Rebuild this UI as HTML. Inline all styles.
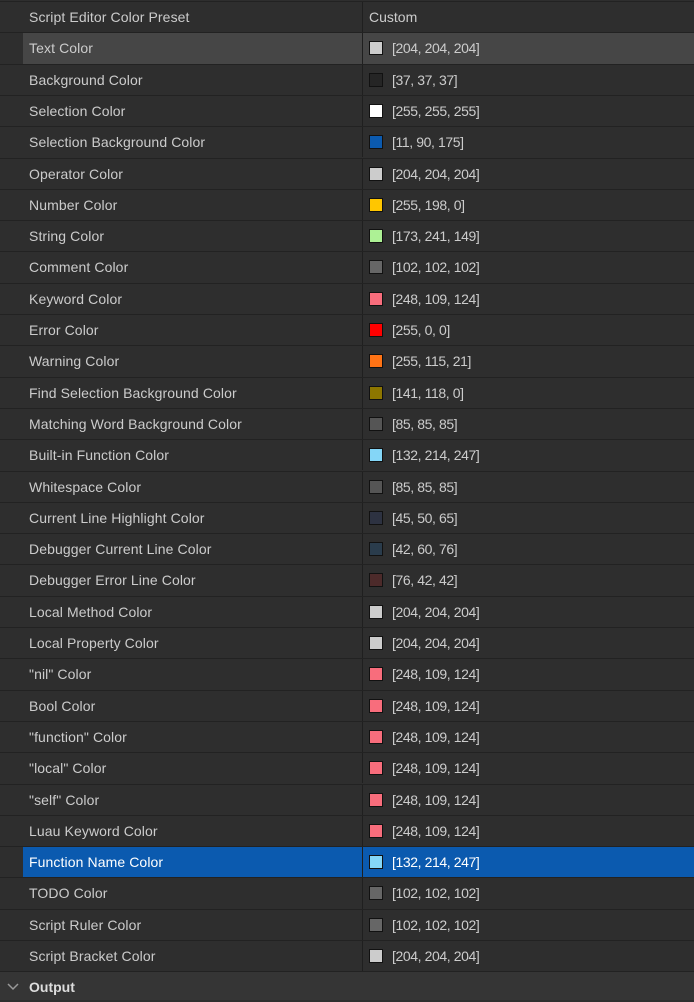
<!DOCTYPE html>
<html><head><style>
*{margin:0;padding:0;box-sizing:border-box}
body{width:694px;height:1000px;background:#2e2e2e;overflow:hidden;position:relative;font-family:"Liberation Sans",sans-serif;font-size:14px;color:#cccccc}
.r{position:absolute;left:0;width:694px;height:31.3px;border-top:1px solid #222}
.l{position:absolute;left:23px;top:0;width:339px;height:100%;padding-left:6px;line-height:30px;letter-spacing:0.1px}
.v{position:absolute;left:362px;top:0;right:0;height:100%;border-left:1px solid #1f1f1f;padding-left:29px;line-height:30px;letter-spacing:-0.4px}
.s{position:absolute;left:6px;top:8px;width:14px;height:14px;border:1px solid #111}
.hl .l,.hl .v{background:#464646}
.sel .l,.sel .v{background:#0b5aaf;color:#fff}
.out{position:absolute;left:0;top:971px;width:694px;height:29px;background:#353535;border-top:1px solid #222;font-weight:bold;line-height:30px;padding-left:29px;color:#ddd}
.out svg{position:absolute;left:7px;top:11px}
</style></head><body>
<div class="r" style="top:1px"><div class="l">Script Editor Color Preset</div><div class="v" style="padding-left:6px;letter-spacing:0">Custom</div></div>
<div class="r hl" style="top:32.3px"><div class="l">Text Color</div><div class="v"><span class="s" style="background:rgb(204,204,204)"></span>[204, 204, 204]</div></div>
<div class="r" style="top:63.6px"><div class="l">Background Color</div><div class="v"><span class="s" style="background:rgb(37,37,37)"></span>[37, 37, 37]</div></div>
<div class="r" style="top:94.9px"><div class="l">Selection Color</div><div class="v"><span class="s" style="background:rgb(255,255,255)"></span>[255, 255, 255]</div></div>
<div class="r" style="top:126.2px"><div class="l">Selection Background Color</div><div class="v"><span class="s" style="background:rgb(11,90,175)"></span>[11, 90, 175]</div></div>
<div class="r" style="top:157.5px"><div class="l">Operator Color</div><div class="v"><span class="s" style="background:rgb(204,204,204)"></span>[204, 204, 204]</div></div>
<div class="r" style="top:188.8px"><div class="l">Number Color</div><div class="v"><span class="s" style="background:rgb(255,198,0)"></span>[255, 198, 0]</div></div>
<div class="r" style="top:220.1px"><div class="l">String Color</div><div class="v"><span class="s" style="background:rgb(173,241,149)"></span>[173, 241, 149]</div></div>
<div class="r" style="top:251.4px"><div class="l">Comment Color</div><div class="v"><span class="s" style="background:rgb(102,102,102)"></span>[102, 102, 102]</div></div>
<div class="r" style="top:282.7px"><div class="l">Keyword Color</div><div class="v"><span class="s" style="background:rgb(248,109,124)"></span>[248, 109, 124]</div></div>
<div class="r" style="top:314px"><div class="l">Error Color</div><div class="v"><span class="s" style="background:rgb(255,0,0)"></span>[255, 0, 0]</div></div>
<div class="r" style="top:345.3px"><div class="l">Warning Color</div><div class="v"><span class="s" style="background:rgb(255,115,21)"></span>[255, 115, 21]</div></div>
<div class="r" style="top:376.6px"><div class="l">Find Selection Background Color</div><div class="v"><span class="s" style="background:rgb(141,118,0)"></span>[141, 118, 0]</div></div>
<div class="r" style="top:407.9px"><div class="l">Matching Word Background Color</div><div class="v"><span class="s" style="background:rgb(85,85,85)"></span>[85, 85, 85]</div></div>
<div class="r" style="top:439.2px"><div class="l">Built-in Function Color</div><div class="v"><span class="s" style="background:rgb(132,214,247)"></span>[132, 214, 247]</div></div>
<div class="r" style="top:470.5px"><div class="l">Whitespace Color</div><div class="v"><span class="s" style="background:rgb(85,85,85)"></span>[85, 85, 85]</div></div>
<div class="r" style="top:501.8px"><div class="l">Current Line Highlight Color</div><div class="v"><span class="s" style="background:rgb(45,50,65)"></span>[45, 50, 65]</div></div>
<div class="r" style="top:533.1px"><div class="l">Debugger Current Line Color</div><div class="v"><span class="s" style="background:rgb(42,60,76)"></span>[42, 60, 76]</div></div>
<div class="r" style="top:564.4px"><div class="l">Debugger Error Line Color</div><div class="v"><span class="s" style="background:rgb(76,42,42)"></span>[76, 42, 42]</div></div>
<div class="r" style="top:595.7px"><div class="l">Local Method Color</div><div class="v"><span class="s" style="background:rgb(204,204,204)"></span>[204, 204, 204]</div></div>
<div class="r" style="top:627px"><div class="l">Local Property Color</div><div class="v"><span class="s" style="background:rgb(204,204,204)"></span>[204, 204, 204]</div></div>
<div class="r" style="top:658.3px"><div class="l">"nil" Color</div><div class="v"><span class="s" style="background:rgb(248,109,124)"></span>[248, 109, 124]</div></div>
<div class="r" style="top:689.6px"><div class="l">Bool Color</div><div class="v"><span class="s" style="background:rgb(248,109,124)"></span>[248, 109, 124]</div></div>
<div class="r" style="top:720.9px"><div class="l">"function" Color</div><div class="v"><span class="s" style="background:rgb(248,109,124)"></span>[248, 109, 124]</div></div>
<div class="r" style="top:752.2px"><div class="l">"local" Color</div><div class="v"><span class="s" style="background:rgb(248,109,124)"></span>[248, 109, 124]</div></div>
<div class="r" style="top:783.5px"><div class="l">"self" Color</div><div class="v"><span class="s" style="background:rgb(248,109,124)"></span>[248, 109, 124]</div></div>
<div class="r" style="top:814.8px"><div class="l">Luau Keyword Color</div><div class="v"><span class="s" style="background:rgb(248,109,124)"></span>[248, 109, 124]</div></div>
<div class="r sel" style="top:846.1px"><div class="l">Function Name Color</div><div class="v"><span class="s" style="background:rgb(132,214,247)"></span>[132, 214, 247]</div></div>
<div class="r" style="top:877.4px"><div class="l">TODO Color</div><div class="v"><span class="s" style="background:rgb(102,102,102)"></span>[102, 102, 102]</div></div>
<div class="r" style="top:908.7px"><div class="l">Script Ruler Color</div><div class="v"><span class="s" style="background:rgb(102,102,102)"></span>[102, 102, 102]</div></div>
<div class="r" style="top:940px"><div class="l">Script Bracket Color</div><div class="v"><span class="s" style="background:rgb(204,204,204)"></span>[204, 204, 204]</div></div>
<div class="out"><svg width="12" height="8" viewBox="0 0 12 8"><path d="M1 1 L6 6 L11 1" stroke="#999" stroke-width="1.5" fill="none"/></svg>Output</div>
</body></html>
